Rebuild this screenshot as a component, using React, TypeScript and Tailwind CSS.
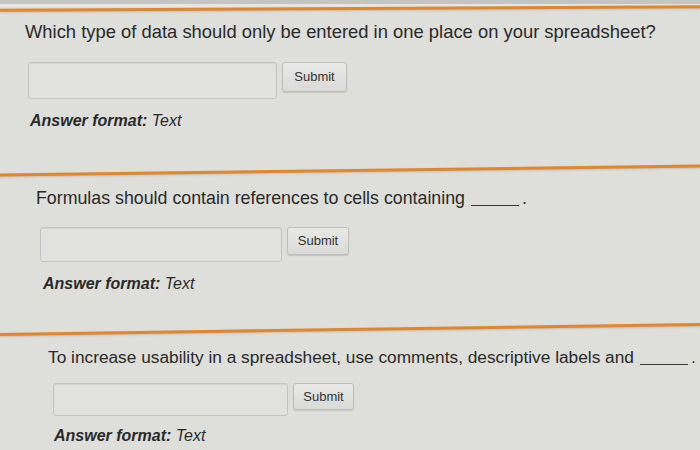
import React from "react";

type Q = {
  text: string;
  blank?: boolean;
  pad: string;
  qTop: string;
  qSize: string;
  inputTop: string;
  inputBox: string;
  btnBox: string;
  ansTop: string;
  ansPad: string;
};

const questions: Q[] = [
  {
    text: "Which type of data should only be entered in one place on your spreadsheet?",
    pad: "pl-[25px]",
    qTop: "mt-[11px]",
    qSize: "text-[18.4px]",
    inputTop: "mt-[19px] ml-[3px]",
    inputBox: "w-[249px] h-[37px]",
    btnBox: "w-[65px] h-[30px]",
    ansTop: "mt-[12px]",
    ansPad: "ml-[5px]",
  },
  {
    text: "Formulas should contain references to cells containing",
    blank: true,
    pad: "pl-[36px]",
    qTop: "mt-[15px]",
    qSize: "text-[17.8px]",
    inputTop: "mt-[18px] ml-[4px]",
    inputBox: "w-[242px] h-[35px]",
    btnBox: "w-[62px] h-[28px]",
    ansTop: "mt-[12px]",
    ansPad: "ml-[7px]",
  },
  {
    text: "To increase usability in a spreadsheet, use comments, descriptive labels and",
    blank: true,
    pad: "pl-[48px]",
    qTop: "mt-[15px]",
    qSize: "text-[17.3px]",
    inputTop: "mt-[15px] ml-[5px]",
    inputBox: "w-[235px] h-[33px]",
    btnBox: "w-[61px] h-[27px]",
    ansTop: "mt-[10px]",
    ansPad: "ml-[6px]",
  },
];

function Question({ q }: { q: Q }) {
  return (
    <div className={q.pad}>
      <div className={`${q.qTop} ${q.qSize} leading-[22px] text-[#2a2a2a] whitespace-nowrap flex items-baseline`}>
        <span>{q.text}</span>
        {q.blank && (
          <>
            <span className="ml-[6px] w-[48px] h-[1px] bg-[#3a3a3a] self-baseline translate-y-[2px]" />
            <span className="ml-[3px]">.</span>
          </>
        )}
      </div>
      <div className={`${q.inputTop} flex items-start gap-[5px]`}>
        <div className={`${q.inputBox} border border-[#c3c3c1] rounded-[3px] bg-[#e1e1df] shadow-[inset_0_1px_1px_rgba(0,0,0,0.06)]`} />
        <button
          className={`${q.btnBox} border border-[#bdbdbb] rounded-[3px] bg-gradient-to-b from-[#e8e8e6] to-[#dadad8] shadow-[0_1px_1px_rgba(0,0,0,0.12)] text-[13px] text-[#333] flex items-center justify-center`}
        >
          Submit
        </button>
      </div>
      <div className={`${q.ansTop} ${q.ansPad} text-[16px] leading-[20px] italic text-[#2a2a2a]`}>
        <span className="font-bold">Answer format:</span> Text
      </div>
    </div>
  );
}

export default function App() {
  return (
    <div className="w-[700px] h-[450px] overflow-hidden bg-[#dededb] font-['Liberation_Sans',Arial,sans-serif]">
      <div className="h-[4px] bg-[#c4c4c2]" />
      <div className="h-[3px] bg-[#e6e6e4]" />
      <div className="h-[3px] bg-[#d48a3e] -rotate-[0.3deg] shadow-[0_1px_2px_rgba(230,160,90,0.6)]" />
      <Question q={questions[0]} />
      <div className="mt-[38px] -mx-[10px] h-[3px] bg-[#d48a3e] -rotate-[0.75deg] shadow-[0_1px_2px_rgba(230,160,90,0.6)]" />
      <Question q={questions[1]} />
      <div className="mt-[34px] -mx-[10px] h-[3px] bg-[#d48a3e] -rotate-[0.8deg] shadow-[0_1px_2px_rgba(230,160,90,0.6)]" />
      <Question q={questions[2]} />
    </div>
  );
}
